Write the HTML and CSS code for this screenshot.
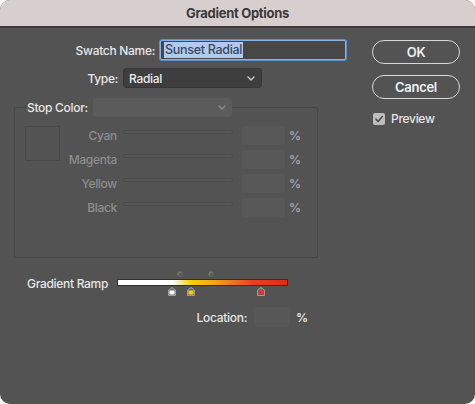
FILE: index.html
```html
<!DOCTYPE html>
<html lang="en">
<head>
<meta charset="utf-8">
<title>Gradient Options</title>
<link rel="stylesheet" href="styles.css">
</head>
<body>
<div class="dialog">
  <header class="titlebar">Gradient Options</header>
  <div class="body">
    <div class="main">
      <div class="row">
        <label class="lbl lbl-name">Swatch Name:</label>
        <div class="text-field"><span class="selected-text">Sunset Radial</span></div>
      </div>
      <div class="row row-type">
        <label class="lbl lbl-type">Type:</label>
        <div class="select select-dark">
          <span>Radial</span>
          <svg class="chev" width="8" height="5" viewBox="0 0 8 5"><path d="M1 1 L4 4 L7 1" fill="none" stroke="#cfcfcf" stroke-width="1.3" stroke-linecap="round" stroke-linejoin="round"/></svg>
        </div>
      </div>

      <fieldset class="stop-box">
        <legend class="stop-legend">
          <span class="lbl">Stop Color:</span>
          <div class="select select-off">
            <span></span>
            <svg class="chev" width="8" height="5" viewBox="0 0 8 5"><path d="M1 1 L4 4 L7 1" fill="none" stroke="#8c8c8c" stroke-width="1.3" stroke-linecap="round" stroke-linejoin="round"/></svg>
          </div>
        </legend>
        <div class="stop-inner">
          <div class="swatch"></div>
          <div class="channels">
            <div class="chan"><span class="chan-lbl">Cyan</span><span class="track"></span><span class="num"></span><span class="pct">%</span></div>
            <div class="chan"><span class="chan-lbl">Magenta</span><span class="track"></span><span class="num"></span><span class="pct">%</span></div>
            <div class="chan"><span class="chan-lbl">Yellow</span><span class="track"></span><span class="num"></span><span class="pct">%</span></div>
            <div class="chan"><span class="chan-lbl">Black</span><span class="track"></span><span class="num"></span><span class="pct">%</span></div>
          </div>
        </div>
      </fieldset>

      <div class="ramp-row">
        <span class="lbl ramp-lbl">Gradient Ramp</span>
        <div class="ramp">
          <div class="ramp-bar"></div>
          <span class="midpoint" style="left:60px"></span>
          <span class="midpoint" style="left:91px"></span>
          <svg class="stop" style="left:51px" width="8" height="9" viewBox="0 0 8 9"><path d="M0.5 3 L4 0.5 L7.5 3 V8.5 H0.5 Z" fill="#6a6a6a" stroke="#9c9c9c"/><rect x="1.5" y="3.5" width="5" height="4" fill="#ffffff"/></svg>
          <svg class="stop" style="left:70px" width="8" height="9" viewBox="0 0 8 9"><path d="M0.5 3 L4 0.5 L7.5 3 V8.5 H0.5 Z" fill="#6a6a6a" stroke="#9c9c9c"/><rect x="1.5" y="3.5" width="5" height="4" fill="#f6cf00"/></svg>
          <svg class="stop" style="left:140px" width="8" height="9" viewBox="0 0 8 9"><path d="M0.5 3 L4 0.5 L7.5 3 V8.5 H0.5 Z" fill="#6a6a6a" stroke="#9c9c9c"/><rect x="1.5" y="3.5" width="5" height="4" fill="#e8301c"/></svg>
        </div>
      </div>

      <div class="row loc-row">
        <label class="lbl lbl-loc">Location:</label>
        <span class="num loc-num"></span>
        <span class="pct loc-pct">%</span>
      </div>
    </div>

    <aside class="actions">
      <button class="btn">OK</button>
      <button class="btn btn-cancel">Cancel</button>
      <div class="preview">
        <svg class="check" width="12" height="12" viewBox="0 0 12 12"><rect x="0" y="0" width="12" height="12" rx="2" fill="#bdbdbd"/><path d="M3 6.2 L5.1 8.4 L9.2 3.6" fill="none" stroke="#4a4a4a" stroke-width="1.6" stroke-linecap="round" stroke-linejoin="round"/></svg>
        <span class="lbl">Preview</span>
      </div>
    </aside>
  </div>
</div>
</body>
</html>
```

FILE: styles.css
```css
* { box-sizing: border-box; }

html, body {
  margin: 0;
  padding: 0;
  background: #ffffff;
}

body {
  font-family: Inter, "Open Sans", "Liberation Sans", sans-serif;
  font-size: 12px;
  letter-spacing: -0.3px;
}

.dialog {
  width: 475px;
  height: 404px;
  border-radius: 10px;
  overflow: hidden;
  background: #535353;
  color: #e4e4e4;
}

.titlebar {
  height: 28px;
  background: #d7cfce;
  border-bottom: 2px solid #3b3b3b;
  display: flex;
  align-items: center;
  justify-content: center;
  font-weight: 700;
  font-size: 13px;
  color: #3a3a3a;
}

.body {
  display: flex;
  padding-top: 12px;
}

.main {
  width: 360px;
  display: flex;
  flex-direction: column;
}

.row {
  display: flex;
  align-items: center;
}

.lbl {
  font-weight: 500;
  color: #e6e6e6;
  white-space: nowrap;
}

.lbl-name { width: 155px; text-align: right; }
.lbl-type { width: 118px; text-align: right; }

.text-field {
  margin-left: 5px;
  width: 186px;
  height: 20px;
  background: #474747;
  border: 1px solid #86b1e6;
  box-shadow: 0 0 0 1px #5d8fcf;
  border-radius: 2px;
  display: flex;
  align-items: center;
  padding-left: 3px;
}

.selected-text {
  background: #b2cbea;
  color: #33496a;
  font-weight: 500;
  font-size: 12.5px;
  line-height: 16px;
  padding: 0 1px;
}

.row-type { margin-top: 8px; }

.select {
  height: 20px;
  border-radius: 3px;
  display: flex;
  align-items: center;
  justify-content: space-between;
  padding: 0 6px 0 5px;
}

.select-dark {
  margin-left: 5px;
  width: 139px;
  background: #3e3e3e;
  border: 1px solid #363636;
  color: #ececec;
  font-weight: 500;
}

.select-off {
  margin-left: 5px;
  width: 139px;
  height: 19px;
  background: #5b5b5b;
}

.stop-box {
  margin: 10px 0 0 14px;
  width: 304px;
  border: 1px solid #474747;
  border-radius: 2px;
  padding: 0 0 40px 0;
}

.stop-legend {
  margin-left: 12px;
  padding: 0;
  display: flex;
  align-items: center;
}

.stop-inner {
  display: flex;
  padding: 9px 0 0 10px;
}

.swatch {
  width: 35px;
  height: 35px;
  border: 1px solid #474747;
}

.channels {
  display: flex;
  flex-direction: column;
  gap: 5px;
}

.chan {
  display: flex;
  align-items: center;
  height: 19px;
}

.chan-lbl {
  width: 57px;
  text-align: right;
  color: #8d8d8d;
  font-weight: 500;
}

.track {
  align-self: flex-start;
  margin: 4px 0 0 6px;
  width: 110px;
  height: 4px;
  border: 1px solid #4a4a4a;
  border-radius: 2px;
  background: #575757;
}

.num {
  margin-left: 9px;
  width: 43px;
  height: 19px;
  background: #585858;
  border-radius: 3px;
}

.pct {
  margin-left: 4px;
  color: #a2a2a2;
  font-weight: 600;
}

.ramp-row {
  display: flex;
  align-items: flex-start;
  margin-top: 12px;
  padding-left: 27px;
}

.ramp-lbl {
  width: 90px;
  margin-top: 6px;
}

.ramp {
  position: relative;
  width: 171px;
  height: 26px;
}

.ramp-bar {
  margin-top: 9px;
  height: 7px;
  border: 1px solid #2f2f2f;
  background: linear-gradient(90deg, #ffffff 0%, #ffffff 32%, #f7d200 43%, #f3a01c 58%, #e9401e 80%, #e22a1a 100%);
}

.midpoint {
  position: absolute;
  top: 1px;
  width: 6px;
  height: 6px;
  border-radius: 50%;
  background: radial-gradient(circle at 60% 60%, #5a5a5a 0 45%, #7c7c7c 50%);
  border: 1px solid #666666;
}

.stop {
  position: absolute;
  top: 17px;
}

.loc-row { margin-top: 11px; }

.lbl-loc { width: 247px; text-align: right; }

.loc-num {
  margin-left: 7px;
  width: 36px;
  height: 20px;
  background: #575757;
}

.loc-pct { margin-left: 6px; color: #e6e6e6; }

.actions {
  margin-left: 12px;
  width: 88px;
  display: flex;
  flex-direction: column;
}

.btn {
  width: 88px;
  height: 24px;
  border: 1.5px solid #d8d8d8;
  border-radius: 12px;
  background: transparent;
  color: #f0f0f0;
  font-family: inherit;
  letter-spacing: inherit;
  font-weight: 600;
  font-size: 13px;
  padding: 0;
}

.btn-cancel { margin-top: 11px; }

.preview {
  margin-top: 12px;
  display: flex;
  align-items: center;
  padding-left: 1px;
}

.check { margin-right: 6px; }
```
